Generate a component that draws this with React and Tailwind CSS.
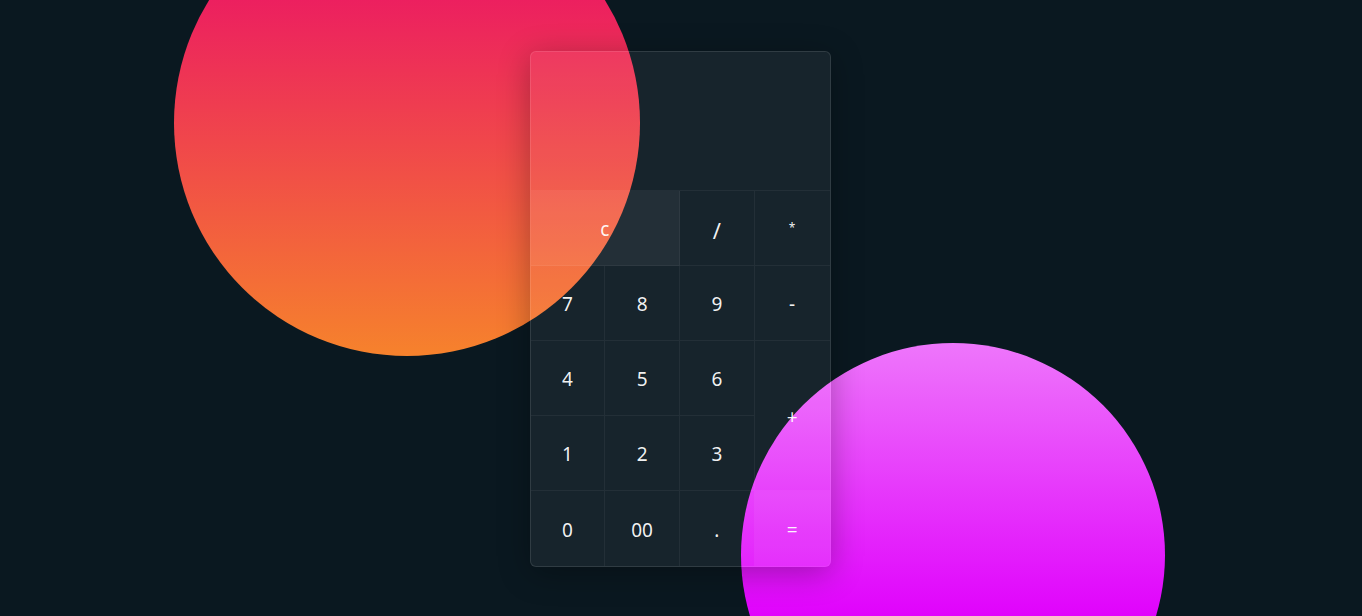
export default function App() {
  const cell =
    "flex items-center justify-center pt-1 border-white/[0.05] font-normal text-white/95 select-none"

  return (
    <div className="relative w-full h-screen min-h-[616px] overflow-hidden bg-[#0a1820] flex items-center justify-center font-['Noto_Sans',sans-serif]">
      {/* background blobs */}
      <div className="absolute left-[174px] top-[-110px] w-[466px] h-[466px] rounded-full bg-[linear-gradient(to_bottom,#e9016f,#f6822c)]" />
      <div className="absolute left-[741px] top-[343px] w-[424px] h-[424px] rounded-full bg-[linear-gradient(to_bottom,#ee76fb,#e000fc_66%)]" />

      {/* calculator */}
      <div className="relative w-[301px] mt-[1px] mr-[2px] rounded-md border border-white/[0.11] bg-white/[0.055] shadow-[0_6px_32px_rgba(0,0,0,0.3)] overflow-hidden text-[19px]">
        <div className="h-[139px] border-b border-white/[0.05]" />
        <div className="grid grid-cols-4 grid-rows-[repeat(5,75px)]">
          <button className={`${cell} col-span-2 bg-white/[0.05] border-r border-b`}>c</button>
          <button className={`${cell} border-r border-b`}>
            <span className="text-[22px] leading-none">/</span>
          </button>
          <button className={`${cell} border-b`}>
            <span className="text-[12px] leading-none -mt-1">*</span>
          </button>

          <button className={`${cell} border-r border-b`}>7</button>
          <button className={`${cell} border-r border-b`}>8</button>
          <button className={`${cell} border-r border-b`}>9</button>
          <button className={`${cell} border-b`}>-</button>

          <button className={`${cell} border-r border-b`}>4</button>
          <button className={`${cell} border-r border-b`}>5</button>
          <button className={`${cell} border-r border-b`}>6</button>
          <button className={`${cell} row-span-2 border-b`}>+</button>

          <button className={`${cell} border-r border-b`}>1</button>
          <button className={`${cell} border-r border-b`}>2</button>
          <button className={`${cell} border-r border-b`}>3</button>

          <button className={`${cell} border-r`}>0</button>
          <button className={`${cell} border-r`}>00</button>
          <button className={`${cell} border-r`}>.</button>
          <button className={`${cell} bg-white/[0.05] text-white`}>=</button>
        </div>
      </div>
    </div>
  )
}
